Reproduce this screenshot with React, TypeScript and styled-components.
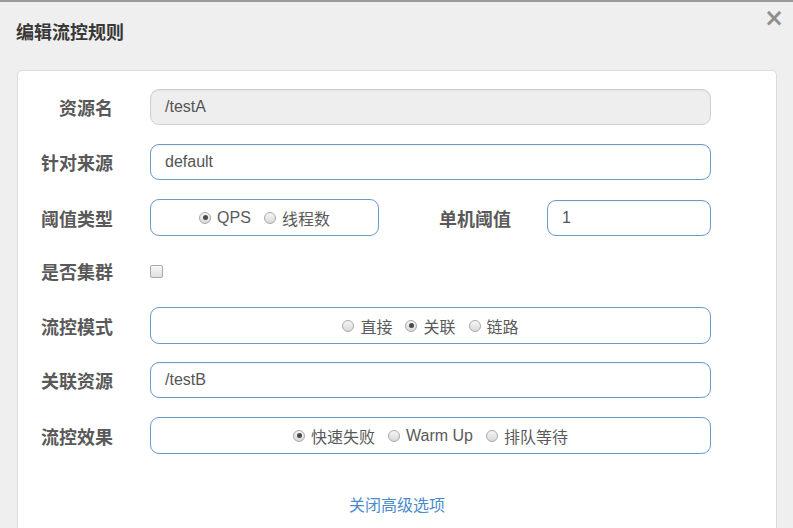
import React from 'react';
import styled, { createGlobalStyle } from 'styled-components';

const GlobalStyle = createGlobalStyle`
  html, body {
    margin: 0;
    padding: 0;
    background: #efefef;
  }
  body {
    font-family: "Liberation Sans", Arial, "Noto Sans CJK SC", sans-serif;
  }
`;

interface RadioOption {
  label: string;
  checked?: boolean;
}

const Dialog = styled.div`
  width: 793px;
  height: 528px;
  box-sizing: border-box;
  overflow: hidden;
  background: #efefef;
  border-top: 2px solid #9a9a9a;
`;

const Header = styled.div`
  display: flex;
  justify-content: space-between;
  align-items: flex-start;
  height: 68px;
  padding: 0 9px 0 16px;
  box-sizing: border-box;
`;

const Title = styled.h4`
  margin: 19px 0 0;
  font-size: 18px;
  line-height: 24px;
  font-weight: bold;
  color: #383838;
`;

const CloseButton = styled.button`
  margin-top: 6px;
  padding: 0;
  border: none;
  background: transparent;
  color: #8f8f8f;
  font-size: 24px;
  line-height: 20px;
  font-weight: bold;
  font-family: "DejaVu Sans", sans-serif;
  cursor: pointer;
`;

const Panel = styled.div`
  width: 760px;
  margin-left: 17px;
  box-sizing: border-box;
  padding: 18px 0 40px;
  background: #fff;
  border: 1px solid #dcdcdc;
  border-radius: 5px;
`;

const Form = styled.div`
  display: flex;
  flex-direction: column;
  gap: 19px;
`;

const Row = styled.div<{ $height?: number }>`
  display: grid;
  grid-template-columns: 95px 561px;
  column-gap: 37px;
  align-items: center;
  height: ${(p) => p.$height ?? 36}px;
`;

const Label = styled.label`
  text-align: right;
  font-size: 18px;
  font-weight: bold;
  color: #595959;
  white-space: nowrap;
`;

const Input = styled.div<{ $readOnly?: boolean }>`
  height: 36px;
  box-sizing: border-box;
  display: flex;
  align-items: center;
  padding: 0 14px;
  font-size: 16px;
  color: #555;
  background: ${(p) => (p.$readOnly ? '#eeeeee' : '#fff')};
  border: 1px solid ${(p) => (p.$readOnly ? '#cfcfcf' : '#6b9acb')};
  border-radius: 9px;
  box-shadow: inset 0 1px 1px rgba(0, 0, 0, 0.05);
`;

const SplitField = styled.div`
  display: grid;
  grid-template-columns: 229px 1fr 164px;
  align-items: center;
`;

const SideLabel = styled(Label)`
  margin-right: 36px;
`;

const RadioBox = styled.div`
  height: 37px;
  box-sizing: border-box;
  display: flex;
  align-items: center;
  justify-content: center;
  gap: 13px;
  border: 1px solid #6b9acb;
  border-radius: 9px;
  font-size: 16px;
  color: #5a5a5a;
`;

const RadioItem = styled.span`
  display: inline-flex;
  align-items: center;
  gap: 6px;
`;

const RadioCircle = styled.span<{ $checked?: boolean }>`
  position: relative;
  width: 12px;
  height: 12px;
  box-sizing: border-box;
  border-radius: 50%;
  border: 1px solid #a9a9a9;
  background: linear-gradient(#f6f6f6, #d9d9d9);

  &::after {
    content: '';
    display: ${(p) => (p.$checked ? 'block' : 'none')};
    position: absolute;
    left: 2.5px;
    top: 2.5px;
    width: 5px;
    height: 5px;
    border-radius: 50%;
    background: #4a4a4a;
  }
`;

const CheckboxCell = styled.div`
  display: flex;
  align-items: center;
`;

const Checkbox = styled.span`
  width: 13px;
  height: 13px;
  box-sizing: border-box;
  border: 1px solid #a9a9a9;
  border-radius: 2px;
  background: linear-gradient(#f7f7f7, #e0e0e0);
`;

const ToggleLink = styled.a`
  display: block;
  margin-top: 39px;
  text-align: center;
  font-size: 16px;
  color: #4a8bcb;
  text-decoration: none;
  cursor: pointer;
`;

const RadioGroup: React.FC<{ options: RadioOption[] }> = ({ options }) => (
  <RadioBox>
    {options.map((o) => (
      <RadioItem key={o.label}>
        <RadioCircle $checked={o.checked} />
        {o.label}
      </RadioItem>
    ))}
  </RadioBox>
);

export default function App() {
  return (
    <>
      <GlobalStyle />
      <Dialog>
        <Header>
          <Title>编辑流控规则</Title>
          <CloseButton aria-label="close">×</CloseButton>
        </Header>
        <Panel>
          <Form>
            <Row>
              <Label>资源名</Label>
              <Input $readOnly>/testA</Input>
            </Row>
            <Row>
              <Label>针对来源</Label>
              <Input>default</Input>
            </Row>
            <Row>
              <Label>阈值类型</Label>
              <SplitField>
                <RadioGroup options={[{ label: 'QPS', checked: true }, { label: '线程数' }]} />
                <SideLabel>单机阈值</SideLabel>
                <Input>1</Input>
              </SplitField>
            </Row>
            <Row $height={34}>
              <Label>是否集群</Label>
              <CheckboxCell>
                <Checkbox />
              </CheckboxCell>
            </Row>
            <Row>
              <Label>流控模式</Label>
              <RadioGroup
                options={[{ label: '直接' }, { label: '关联', checked: true }, { label: '链路' }]}
              />
            </Row>
            <Row>
              <Label>关联资源</Label>
              <Input>/testB</Input>
            </Row>
            <Row>
              <Label>流控效果</Label>
              <RadioGroup
                options={[
                  { label: '快速失败', checked: true },
                  { label: 'Warm Up' },
                  { label: '排队等待' },
                ]}
              />
            </Row>
          </Form>
          <ToggleLink>关闭高级选项</ToggleLink>
        </Panel>
      </Dialog>
    </>
  );
}
